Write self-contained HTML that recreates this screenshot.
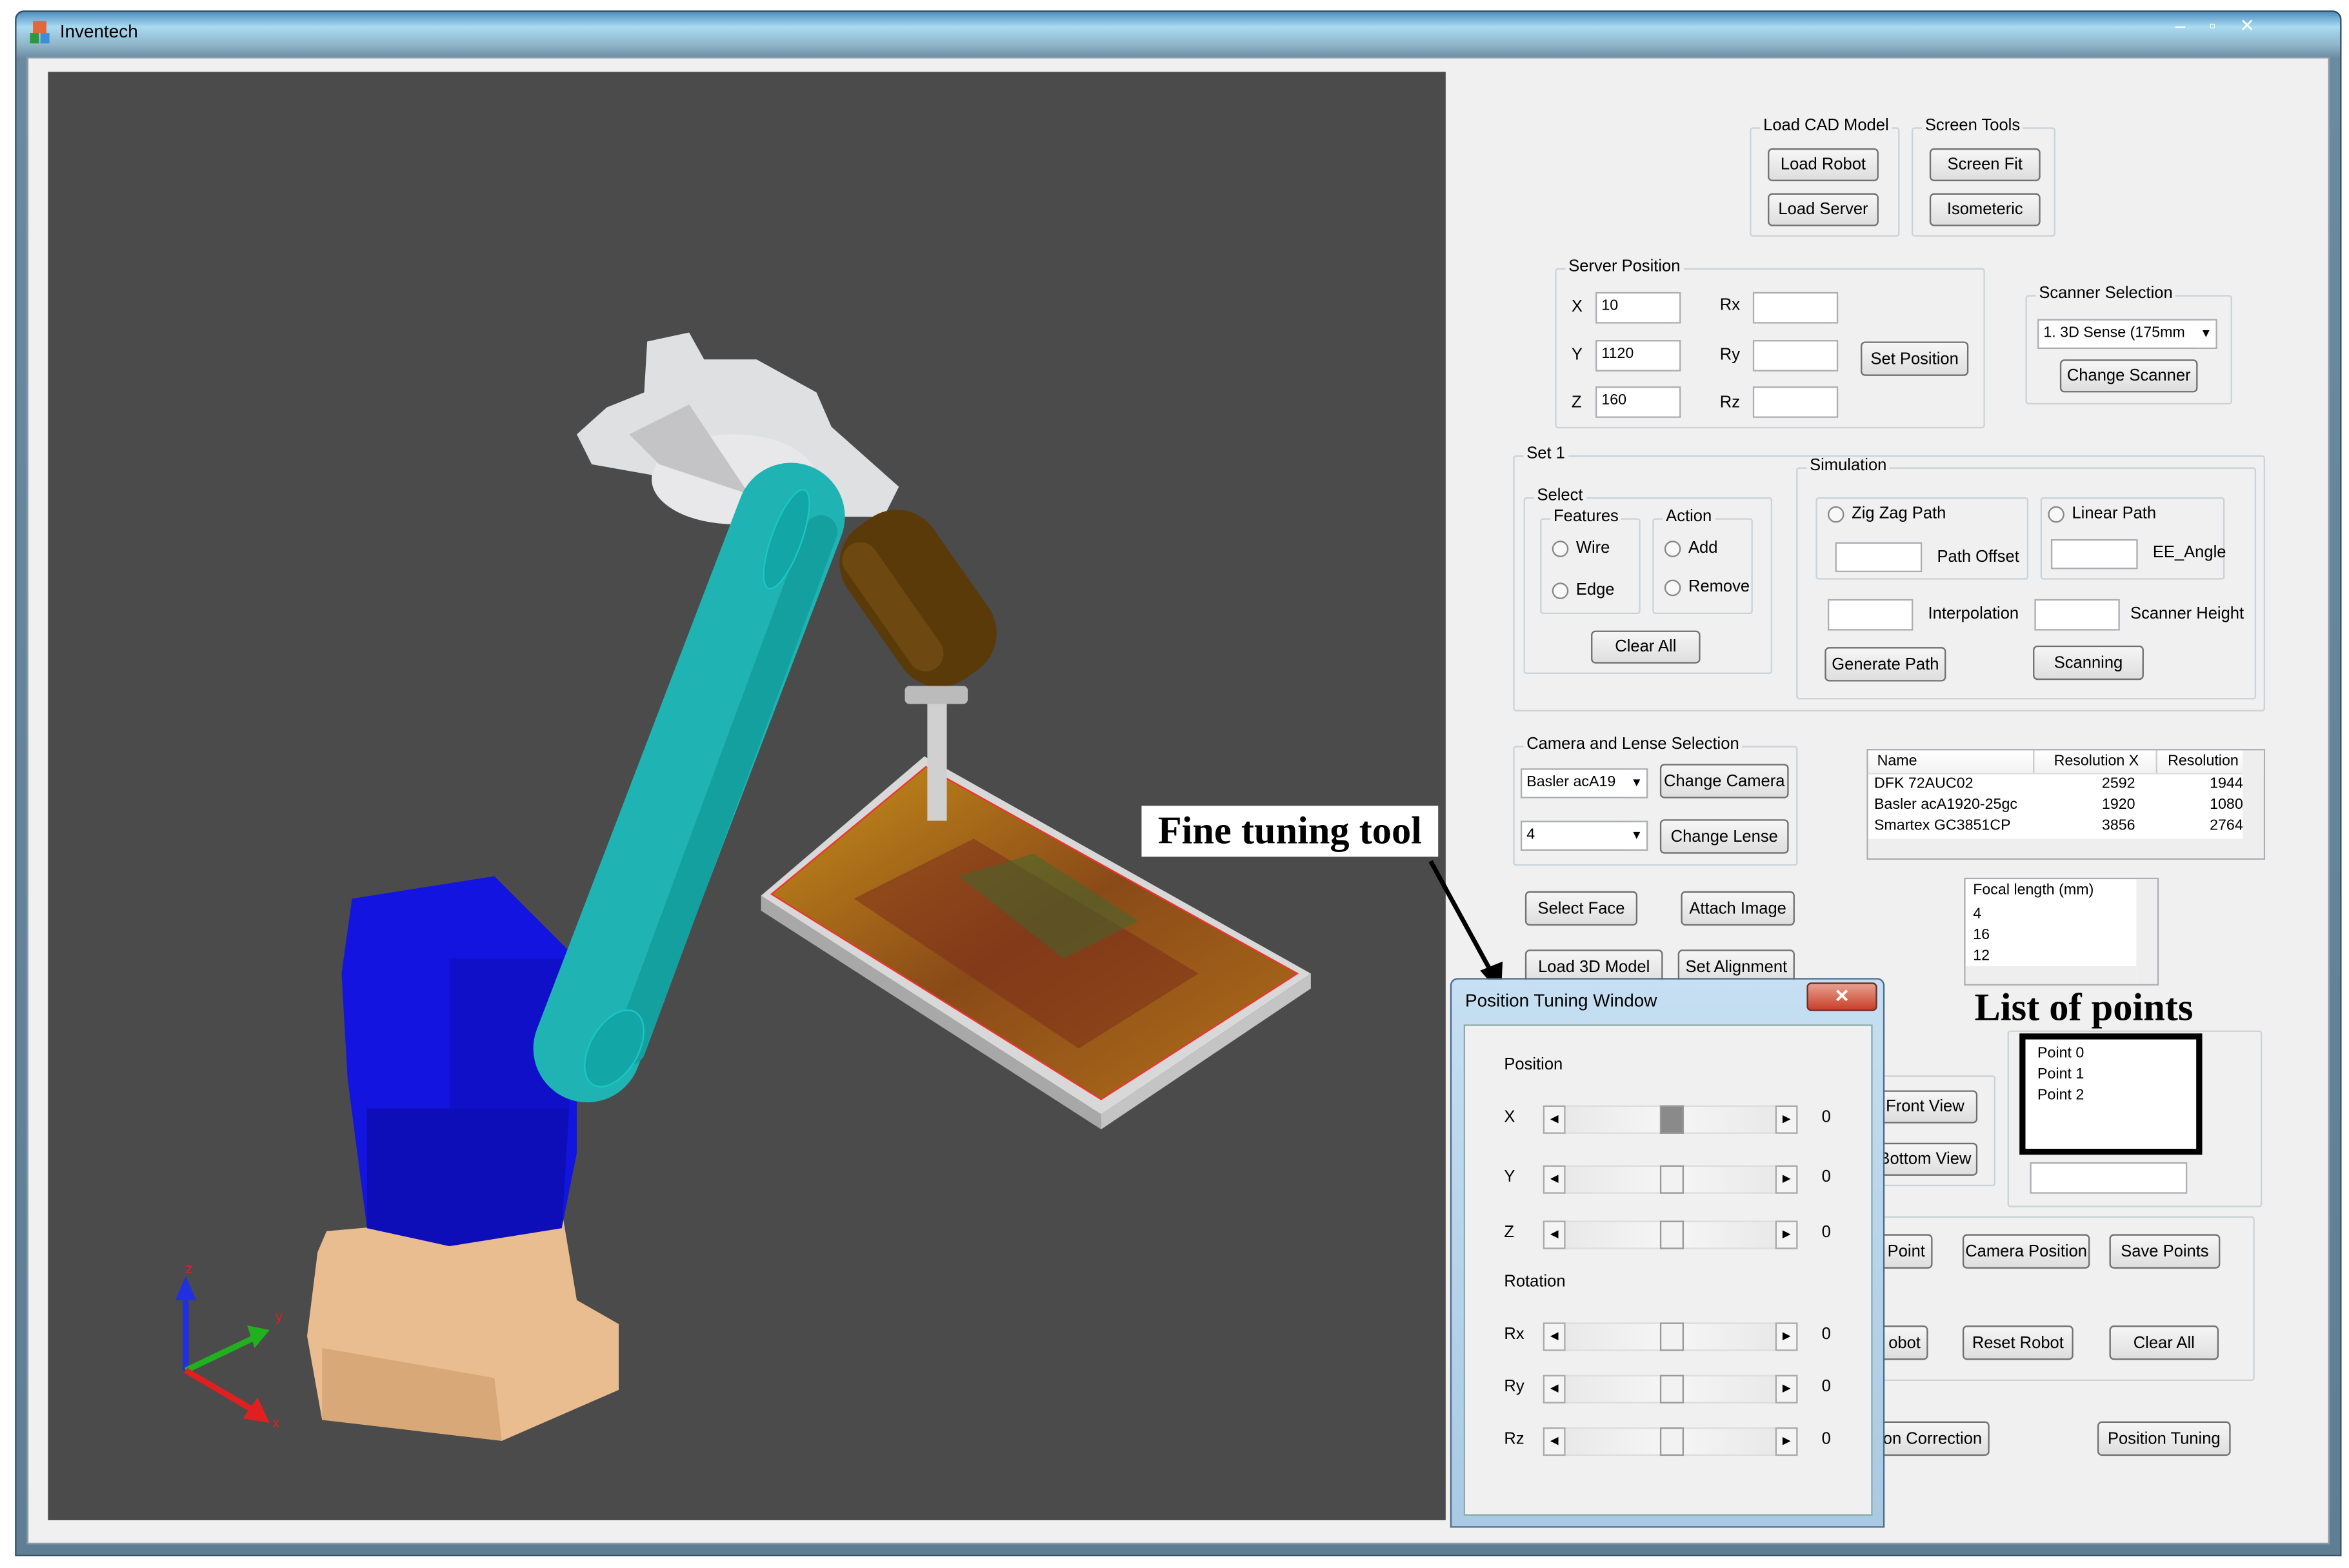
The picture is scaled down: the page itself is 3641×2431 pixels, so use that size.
<!DOCTYPE html>
<html><head><meta charset="utf-8">
<style>
html,body{margin:0;padding:0;background:#fff;overflow:hidden;width:3641px;height:2431px}
#s{position:absolute;left:0;top:0;width:1568px;height:1047px;transform:scale(2.3221);transform-origin:0 0;font-family:"Liberation Sans",sans-serif;font-size:11px;color:#000}
.a{position:absolute}
.btn{position:absolute;background:linear-gradient(#f6f6f6,#dedede);border:1px solid #707070;border-radius:3px;box-sizing:border-box;text-align:center;font-size:11px;display:flex;align-items:center;justify-content:center;white-space:nowrap;overflow:hidden}
.grp{position:absolute;border:1px solid #c9d3d9;box-sizing:border-box;border-radius:2px}
.grp>span{position:absolute;top:-8px;left:6px;background:#f0f0f0;padding:0 2px;font-size:11px;white-space:nowrap}
.inp{position:absolute;background:#fff;border:1px solid #abadb3;box-sizing:border-box;font-size:10px;padding-left:3px;line-height:18px;white-space:nowrap;overflow:hidden}
.rad{position:absolute;width:9px;height:9px;border:1px solid #888;border-radius:50%;background:#f8f8f8}
.lbl{position:absolute;font-size:11px;white-space:nowrap}
</style></head><body><div id="s">
<div class="a" style="left:10px;top:7px;width:1551px;height:1030px;background:linear-gradient(180deg,#4f8fc0 0px,#a9dbf2 10px,#8fb5c8 22px,#6a8aa0 31px,#5f7e94 100%);border:1px solid #2f4a60;border-radius:6px 6px 0 0"></div>
<div class="a" style="left:22px;top:14px;width:9px;height:8px;background:#e0683a"></div>
<div class="a" style="left:20px;top:22px;width:6px;height:7px;background:#2a9a3a"></div>
<div class="a" style="left:27px;top:22px;width:6px;height:7px;background:#3a8fd8"></div>
<div class="lbl" style="left:40px;top:14px;font-size:12px">Inventech</div>
<div class="a" style="left:1452px;top:10px;width:90px;height:14px;color:#fff;font-size:12px;letter-spacing:16px">–▫✕</div>
<div class="a" style="left:18px;top:38px;width:1535px;height:991px;background:#f0f0f0;border:1px solid #8a9aa6"></div>
<div class="a" style="left:32px;top:48px;width:933px;height:967px;background:#4b4b4b"></div>
<svg class="a" style="left:0;top:0" width="1568" height="1047">
 <defs><linearGradient id="pcb" x1="0" y1="0" x2="1" y2="1"><stop offset="0" stop-color="#c8901a"/><stop offset="0.5" stop-color="#8a4a18"/><stop offset="1" stop-color="#b0701a"/></linearGradient></defs>
 <polygon points="508,598 617,505 875,650 735,744" fill="#d8d8d8"/>
 <polygon points="508,598 508,608 735,754 735,744" fill="#a8a8a8"/>
 <polygon points="735,744 875,650 875,660 735,754" fill="#c4c4c4"/>
 <polygon points="515,597 618,512 866,650 735,734" fill="url(#pcb)" stroke="#e33" stroke-width="1"/>
 <polygon points="570,600 650,560 800,650 720,700" fill="#7a2a1a" opacity="0.5"/>
 <polygon points="640,585 690,570 760,615 710,640" fill="#3a6a30" opacity="0.5"/>
 <rect x="619" y="468" width="13" height="80" fill="#d0d0d0"/>
 <polygon points="218,822 375,808 385,868 413,884 413,928 335,962 215,948 205,892 212,836" fill="#e9bd8f"/>
 <polygon points="215,900 330,920 335,962 215,948" fill="#d9a878"/>
 <polygon points="235,600 330,585 385,640 385,770 375,820 300,832 245,820 232,720 228,650" fill="#1414e0"/>
 <polygon points="245,740 380,740 375,820 300,832 245,820" fill="#0e0eb8"/>
 <rect x="300" y="640" width="80" height="100" fill="#1010c8"/>
 <polygon points="432,228 460,222 470,240 505,240 545,262 555,285 600,325 590,345 560,345 520,330 440,318 395,310 385,290 405,272 430,262" fill="#dfe0e2"/>
 <ellipse cx="490" cy="320" rx="55" ry="30" fill="#e8e8ea"/>
 <polygon points="440,310 500,330 460,270 420,290" fill="#c4c4c6"/>
 <g transform="rotate(-35 612 400)"><rect x="578" y="338" width="70" height="124" rx="30" fill="#5a3a08"/><rect x="584" y="345" width="24" height="100" rx="12" fill="#7a5418" opacity="0.6"/></g>
 <rect x="604" y="458" width="42" height="12" rx="3" fill="#bbb"/>
 <line x1="528" y1="345" x2="392" y2="700" stroke="#20b3b3" stroke-width="72" stroke-linecap="round"/>
 <line x1="548" y1="355" x2="420" y2="700" stroke="#15a0a0" stroke-width="22" stroke-linecap="round"/>
 <ellipse cx="525" cy="360" rx="10" ry="35" transform="rotate(20 525 360)" fill="#12a6a6" stroke="#1cc6c6"/>
 <ellipse cx="410" cy="700" rx="16" ry="28" transform="rotate(30 410 700)" fill="#12a6a6" stroke="#1cc6c6"/>
 <line x1="124" y1="915" x2="124" y2="865" stroke="#2030e0" stroke-width="4"/>
 <polygon points="117,868 124,852 131,868" fill="#2030e0"/>
 <line x1="124" y1="915" x2="170" y2="893" stroke="#20b020" stroke-width="4"/>
 <polygon points="165,885 180,888 170,900" fill="#20b020"/>
 <line x1="124" y1="915" x2="170" y2="942" stroke="#e02020" stroke-width="4"/>
 <polygon points="162,947 180,950 172,933" fill="#e02020"/>
 <text x="124" y="850" fill="#e02020" font-size="9">z</text>
 <text x="184" y="882" fill="#e02020" font-size="9">y</text>
 <text x="182" y="953" fill="#e02020" font-size="9">x</text>
 <line x1="955" y1="575" x2="996" y2="650" stroke="#000" stroke-width="3"/>
 <polygon points="988,648 1002,664 1003,642" fill="#000"/>
</svg>
<div class="a" style="left:762px;top:538px;width:198px;height:34px;background:#fff;font-family:'Liberation Serif',serif;font-weight:bold;font-size:26px;line-height:34px;text-align:center">Fine tuning tool</div>

<div class="grp" style="left:1168px;top:85px;width:100px;height:73px"><span>Load CAD Model</span></div>
<div class="btn" style="left:1180px;top:99px;width:74px;height:22px">Load Robot</div>
<div class="btn" style="left:1180px;top:129px;width:74px;height:22px">Load Server</div>
<div class="grp" style="left:1276px;top:85px;width:96px;height:73px"><span>Screen Tools</span></div>
<div class="btn" style="left:1288px;top:99px;width:74px;height:22px">Screen Fit</div>
<div class="btn" style="left:1288px;top:129px;width:74px;height:22px">Isometeric</div>

<div class="grp" style="left:1038px;top:179px;width:287px;height:107px"><span>Server Position</span></div>
<div class="lbl" style="left:1049px;top:199px">X</div><div class="lbl" style="left:1049px;top:231px">Y</div><div class="lbl" style="left:1049px;top:263px">Z</div>
<div class="inp" style="left:1065px;top:195px;width:57px;height:21px">10</div>
<div class="inp" style="left:1065px;top:227px;width:57px;height:21px">1120</div>
<div class="inp" style="left:1065px;top:258px;width:57px;height:21px">160</div>
<div class="lbl" style="left:1148px;top:198px">Rx</div><div class="lbl" style="left:1148px;top:231px">Ry</div><div class="lbl" style="left:1148px;top:263px">Rz</div>
<div class="inp" style="left:1170px;top:195px;width:57px;height:21px"></div>
<div class="inp" style="left:1170px;top:227px;width:57px;height:21px"></div>
<div class="inp" style="left:1170px;top:258px;width:57px;height:21px"></div>
<div class="btn" style="left:1242px;top:228px;width:72px;height:23px">Set Position</div>

<div class="grp" style="left:1352px;top:197px;width:138px;height:73px"><span>Scanner Selection</span></div>
<div class="inp" style="left:1360px;top:213px;width:120px;height:20px">1. 3D Sense (175mm</div>
<div class="a" style="left:1466px;top:214px;width:13px;height:18px;font-size:8px;line-height:18px;text-align:center;background:#fff">▼</div>
<div class="btn" style="left:1375px;top:240px;width:92px;height:22px">Change Scanner</div>

<div class="grp" style="left:1010px;top:304px;width:502px;height:171px"><span>Set 1</span></div>
<div class="grp" style="left:1017px;top:332px;width:166px;height:118px"><span>Select</span></div>
<div class="grp" style="left:1028px;top:346px;width:67px;height:64px"><span>Features</span></div>
<div class="rad" style="left:1036px;top:361px"></div><div class="lbl" style="left:1052px;top:360px">Wire</div>
<div class="rad" style="left:1036px;top:389px"></div><div class="lbl" style="left:1052px;top:388px">Edge</div>
<div class="grp" style="left:1103px;top:346px;width:67px;height:64px"><span>Action</span></div>
<div class="rad" style="left:1111px;top:361px"></div><div class="lbl" style="left:1127px;top:360px">Add</div>
<div class="rad" style="left:1111px;top:387px"></div><div class="lbl" style="left:1127px;top:386px">Remove</div>
<div class="btn" style="left:1062px;top:421px;width:73px;height:22px">Clear All</div>

<div class="grp" style="left:1199px;top:312px;width:307px;height:155px"><span>Simulation</span></div>
<div class="grp" style="left:1212px;top:332px;width:142px;height:55px"></div>
<div class="rad" style="left:1220px;top:338px"></div><div class="lbl" style="left:1236px;top:337px">Zig Zag Path</div>
<div class="inp" style="left:1225px;top:362px;width:58px;height:20px"></div><div class="lbl" style="left:1293px;top:366px">Path Offset</div>
<div class="grp" style="left:1362px;top:332px;width:123px;height:55px"></div>
<div class="rad" style="left:1367px;top:338px"></div><div class="lbl" style="left:1383px;top:337px">Linear Path</div>
<div class="inp" style="left:1369px;top:360px;width:58px;height:20px"></div><div class="lbl" style="left:1437px;top:363px">EE_Angle</div>
<div class="inp" style="left:1220px;top:400px;width:57px;height:21px"></div><div class="lbl" style="left:1287px;top:404px">Interpolation</div>
<div class="inp" style="left:1358px;top:400px;width:57px;height:21px"></div><div class="lbl" style="left:1422px;top:404px">Scanner Height</div>
<div class="btn" style="left:1218px;top:432px;width:81px;height:23px">Generate Path</div>
<div class="btn" style="left:1357px;top:431px;width:74px;height:23px">Scanning</div>

<div class="grp" style="left:1010px;top:498px;width:190px;height:80px"><span>Camera and Lense Selection</span></div>
<div class="inp" style="left:1015px;top:513px;width:85px;height:20px">Basler acA19</div>
<div class="a" style="left:1086px;top:514px;width:13px;height:18px;font-size:8px;line-height:18px;text-align:center;background:#fff">▼</div>
<div class="btn" style="left:1108px;top:510px;width:86px;height:23px">Change Camera</div>
<div class="inp" style="left:1015px;top:548px;width:85px;height:20px">4</div>
<div class="a" style="left:1086px;top:549px;width:13px;height:18px;font-size:8px;line-height:18px;text-align:center;background:#fff">▼</div>
<div class="btn" style="left:1108px;top:547px;width:86px;height:23px">Change Lense</div>

<div class="a" style="left:1246px;top:500px;width:266px;height:74px;background:#fff;border:1px solid #abadb3;box-sizing:border-box;font-size:10px;overflow:hidden">
 <div style="position:absolute;left:0;top:0;width:266px;height:15px;border-bottom:1px solid #ddd;background:linear-gradient(#fff,#f2f2f2)"></div>
 <div class="lbl" style="left:6px;top:2px;font-size:10px">Name</div>
 <div class="a" style="left:110px;top:0;width:1px;height:15px;background:#ccc"></div>
 <div class="lbl" style="left:124px;top:2px;font-size:10px">Resolution X</div>
 <div class="a" style="left:192px;top:0;width:1px;height:15px;background:#ccc"></div>
 <div class="lbl" style="left:200px;top:2px;font-size:10px">Resolution</div>
 <div class="lbl" style="left:4px;top:17px;font-size:10px">DFK 72AUC02</div><div class="lbl" style="left:156px;top:17px;font-size:10px">2592</div><div class="lbl" style="left:228px;top:17px;font-size:10px">1944</div>
 <div class="lbl" style="left:4px;top:31px;font-size:10px">Basler acA1920-25gc</div><div class="lbl" style="left:156px;top:31px;font-size:10px">1920</div><div class="lbl" style="left:228px;top:31px;font-size:10px">1080</div>
 <div class="lbl" style="left:4px;top:45px;font-size:10px">Smartex GC3851CP</div><div class="lbl" style="left:156px;top:45px;font-size:10px">3856</div><div class="lbl" style="left:228px;top:45px;font-size:10px">2764</div>
 <div class="a" style="left:0;top:59px;width:250px;height:14px;background:#eee"></div>
 <div class="a" style="left:250px;top:0;width:15px;height:74px;background:#eee"></div>
</div>

<div class="btn" style="left:1018px;top:595px;width:75px;height:23px">Select Face</div>
<div class="btn" style="left:1122px;top:595px;width:76px;height:23px">Attach Image</div>
<div class="btn" style="left:1018px;top:634px;width:92px;height:23px">Load 3D Model</div>
<div class="btn" style="left:1120px;top:634px;width:78px;height:23px">Set Alignment</div>

<div class="a" style="left:1311px;top:586px;width:130px;height:72px;background:#fff;border:1px solid #abadb3;box-sizing:border-box;font-size:10px">
 <div class="lbl" style="left:5px;top:2px;font-size:10px">Focal length (mm)</div>
 <div class="lbl" style="left:5px;top:18px;font-size:10px">4</div>
 <div class="lbl" style="left:5px;top:32px;font-size:10px">16</div>
 <div class="lbl" style="left:5px;top:46px;font-size:10px">12</div>
 <div class="a" style="left:0;top:58px;width:114px;height:12px;background:#eee"></div>
 <div class="a" style="left:114px;top:0;width:14px;height:70px;background:#eee"></div>
</div>

<div class="grp" style="left:1230px;top:718px;width:102px;height:74px"></div>
<div class="btn" style="left:1250px;top:728px;width:70px;height:22px">Front View</div>
<div class="btn" style="left:1250px;top:763px;width:70px;height:22px">Bottom View</div>
<div class="grp" style="left:1340px;top:688px;width:170px;height:118px"></div>
<div class="a" style="left:1318px;top:658px;font-family:'Liberation Serif',serif;font-weight:bold;font-size:26px;white-space:nowrap">List of points</div>
<div class="a" style="left:1348px;top:690px;width:122px;height:81px;background:#fff;border:4px solid #000;box-sizing:border-box"></div>
<div class="lbl" style="left:1360px;top:698px;font-size:10px">Point 0</div>
<div class="lbl" style="left:1360px;top:712px;font-size:10px">Point 1</div>
<div class="lbl" style="left:1360px;top:726px;font-size:10px">Point 2</div>
<div class="inp" style="left:1355px;top:776px;width:105px;height:21px"></div>

<div class="grp" style="left:1245px;top:812px;width:260px;height:110px"></div>
<div class="btn" style="left:1240px;top:824px;width:50px;height:23px;justify-content:flex-end;padding-right:4px">Point</div>
<div class="btn" style="left:1310px;top:824px;width:85px;height:23px">Camera Position</div>
<div class="btn" style="left:1408px;top:824px;width:74px;height:23px">Save Points</div>
<div class="btn" style="left:1240px;top:885px;width:47px;height:23px;justify-content:flex-end;padding-right:4px">obot</div>
<div class="btn" style="left:1310px;top:885px;width:74px;height:23px">Reset Robot</div>
<div class="btn" style="left:1408px;top:885px;width:73px;height:23px">Clear All</div>
<div class="btn" style="left:1240px;top:949px;width:88px;height:23px;justify-content:flex-end;padding-right:4px">on Correction</div>
<div class="btn" style="left:1400px;top:949px;width:89px;height:23px">Position Tuning</div>

<div class="a" style="left:968px;top:653px;width:290px;height:367px;background:linear-gradient(#c6dff2,#a9c9e4);border:1px solid #4a6a88;border-radius:5px 5px 0 0;box-sizing:border-box"></div>
<div class="lbl" style="left:978px;top:661px;font-size:12px">Position Tuning Window</div>
<div class="a" style="left:1206px;top:656px;width:47px;height:19px;background:linear-gradient(#e8a090,#c8402a);border:1px solid #6a2a20;border-radius:3px;box-sizing:border-box;color:#fff;text-align:center;font-size:12px;line-height:17px;font-weight:bold">✕</div>
<div class="a" style="left:977px;top:684px;width:273px;height:328px;background:#f0f0f0;border:1px solid #8aa;box-sizing:border-box"></div>
<div class="lbl" style="left:1004px;top:705px">Position</div>
<div class="lbl" style="left:1004px;top:850px">Rotation</div>
<div id="sl"></div>
<script>
var rows=[["X",747,1],["Y",787,0],["Z",824,0],["Rx",892,0],["Ry",927,0],["Rz",962,0]];
var h="";
rows.forEach(function(r){var y=r[1];
h+='<div class="lbl" style="left:1004px;top:'+(y-7)+'px">'+r[0]+'</div>';
h+='<div class="a" style="left:1030px;top:'+(y-9)+'px;width:170px;height:19px;background:linear-gradient(90deg,#e6e6e6,#f6f6f6,#e6e6e6);border:1px solid #ddd;box-sizing:border-box"></div>';
h+='<div class="a" style="left:1030px;top:'+(y-9)+'px;width:15px;height:19px;background:#f4f4f4;border:1px solid #aaa;box-sizing:border-box;font-size:7px;line-height:17px;text-align:center">◀</div>';
h+='<div class="a" style="left:1185px;top:'+(y-9)+'px;width:15px;height:19px;background:#f4f4f4;border:1px solid #aaa;box-sizing:border-box;font-size:7px;line-height:17px;text-align:center">▶</div>';
h+='<div class="a" style="left:1108px;top:'+(y-9)+'px;width:16px;height:19px;background:'+(r[2]?'#8a8a8a':'#f2f2f2')+';border:1px solid #999;box-sizing:border-box"></div>';
h+='<div class="lbl" style="left:1216px;top:'+(y-7)+'px">0</div>';});
document.getElementById("sl").innerHTML=h;
</script>
</div></body></html>
